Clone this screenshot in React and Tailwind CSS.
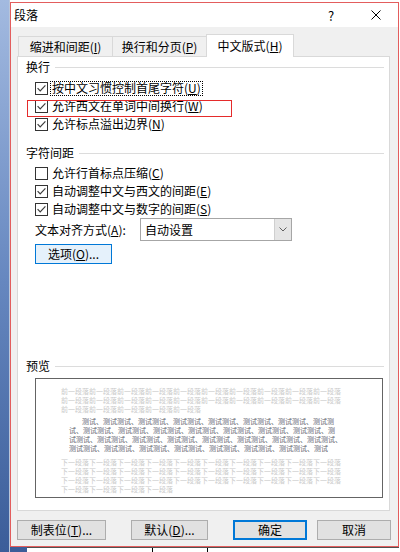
import React from 'react';

const Key = ({ k }) => (
  <>
    (<span className="underline">{k}</span>)
  </>
);

const CheckBox = ({ checked }) => (
  <span className="w-[13px] h-[13px] shrink-0 border border-[#333333] bg-white flex items-center justify-center">
    {checked && (
      <svg width="11" height="11" viewBox="0 0 11 11">
        <path d="M1.6 5.2 L4.2 7.9 L9.4 2.4" fill="none" stroke="#3c3c3c" strokeWidth="1.2" />
      </svg>
    )}
  </span>
);

const CheckRow = ({ checked, label, k, focus, mark }) => (
  <div className="relative h-[18px] flex items-center pl-[17px] gap-[2px]">
    <CheckBox checked={checked} />
    <span
      className={
        focus
          ? 'h-[15px] px-[1px] flex items-center border border-dotted border-black'
          : 'h-[15px] px-[1px] flex items-center border border-transparent'
      }
    >
      {label}
      <Key k={k} />
    </span>
    {/* red annotation box */}
    {mark && <div className="absolute left-[9px] top-[3px] w-[205px] h-[17px] border border-[#e52b2b]" />}
  </div>
);

const GroupTitle = ({ title }) => (
  <div className="h-[20px] flex items-center gap-[5px] pl-[8px] pr-[5px]">
    <span>{title}</span>
    <div className="flex-1 h-px bg-[#dcdcdc]" />
  </div>
);

const prevLines = ['前一段落'.repeat(10), '前一段落'.repeat(10), '前一段落'.repeat(5)];
const nextLines = ['下一段落'.repeat(10), '下一段落'.repeat(10), '下一段落'.repeat(10), '下一段落'.repeat(4)];
const sampleLines = [
  '测试、测试测试、测试测试、测试测试、测试测试、测试测试、测试测试、测试测',
  '试、测试测试、测试测试、测试测试、测试测试、测试测试、测试测试、测试测试、测',
  '试测试、测试测试、测试测试、测试测试、测试测试、测试测试、测试测试、测试测试、',
  '测试测试、测试测试、测试测试、测试测试、测试测试、测试测试、测试测试、测试',
];

const Tab = ({ label, k, active }) =>
  active ? (
    <div className="relative z-10 -ml-px -mb-px h-[23px] w-[88px] bg-white border border-b-0 border-[#d9d9d9] flex items-center justify-center">
      {label}
      <Key k={k} />
    </div>
  ) : (
    <div className="h-[20px] w-[95px] -ml-px first:ml-0 bg-[#f0f0f0] border border-b-0 border-[#d9d9d9] flex items-center justify-center">
      {label}
      <Key k={k} />
    </div>
  );

const Button = ({ children, width, focus }) => (
  <div
    className={
      focus
        ? 'h-[20px] flex items-center justify-center bg-[#e1e1e1] border-2 border-[#0078d7]'
        : 'h-[20px] flex items-center justify-center bg-[#e1e1e1] border border-[#adadad]'
    }
    style={{ width }}
  >
    {children}
  </div>
);

export default function App() {
  return (
    <div className="w-[400px] h-[552px] flex bg-white overflow-hidden text-[12px] leading-none text-black font-['Noto_Sans_CJK_SC',sans-serif]">
      {/* desktop behind the dialog */}
      <div className="w-[10px] h-full bg-gradient-to-b from-[#a3bae0] via-[#6788c0] to-[#3b5d99] border-r border-[#b9c6da]" />

      <div className="flex flex-col w-[389px]">
        <div className="h-[2px]" />

        {/* dialog */}
        <div className="h-[545px] flex flex-col border border-[#e35d5d] bg-[#f0f0f0]">
          {/* title bar */}
          <div className="h-[24px] flex items-center bg-white pl-[3px] pr-[17px]">
            <span className="text-[12px]">段落</span>
            <div className="flex-1" />
            <span className="w-[20px] text-center text-[13px]">?</span>
            <svg className="ml-[30px]" width="10" height="10" viewBox="0 0 10 10">
              <path d="M0.5 0.5 L9.5 9.5 M9.5 0.5 L0.5 9.5" stroke="#000" strokeWidth="1" />
            </svg>
          </div>

          {/* tabs */}
          <div className="flex items-end h-[22px] mt-[7px] pl-[7px]">
            <Tab label="缩进和间距" k="I" />
            <Tab label="换行和分页" k="P" />
            <Tab label="中文版式" k="H" active />
          </div>

          {/* tab panel */}
          <div className="ml-[6px] w-[373px] h-[455px] bg-white border border-[#d9d9d9] flex flex-col">
            <GroupTitle title="换行" />
            <div className="mt-[2px]">
              <CheckRow checked label="按中文习惯控制首尾字符" k="U" focus />
              <CheckRow checked label="允许西文在单词中间换行" k="W" mark />
              <CheckRow checked label="允许标点溢出边界" k="N" />
            </div>

            <div className="mt-[10px]">
              <GroupTitle title="字符间距" />
            </div>
            <div className="mt-[1px]">
              <CheckRow label="允许行首标点压缩" k="C" />
              <CheckRow checked label="自动调整中文与西文的间距" k="E" />
              <CheckRow checked label="自动调整中文与数字的间距" k="S" />
            </div>

            <div className="h-[23px] flex items-center pl-[17px]">
              <span className="w-[105px]">
                文本对齐方式<Key k="A" />:
              </span>
              <div className="w-[152px] h-full flex border border-[#a6a6a6] bg-white">
                <span className="flex-1 flex items-center pl-[4px]">自动设置</span>
                <div className="w-[17px] h-full bg-[#e5e5e5] border-l border-[#cfcfcf] flex items-center justify-center">
                  <svg width="8" height="5" viewBox="0 0 8 5">
                    <path d="M0.5 0.5 L4 4 L7.5 0.5" fill="none" stroke="#606060" strokeWidth="1" />
                  </svg>
                </div>
              </div>
            </div>

            <div className="mt-[3px] ml-[17px] w-[77px] h-[20px] flex items-center justify-center bg-[#e5f1fb] border border-[#0078d7]">
              选项<Key k="O" />...
            </div>

            <div className="mt-[92px]">
              <GroupTitle title="预览" />
            </div>

            {/* preview */}
            <div className="mt-[2px] ml-[17px] w-[348px] h-[120px] border border-[#646464] bg-white overflow-hidden pt-[8px] text-[7px] leading-[9px] whitespace-nowrap">
              <div className="pl-[25px] text-[#c9c9c9]">
                {prevLines.map((l, i) => (
                  <div key={i}>{l}</div>
                ))}
              </div>
              <div className="mt-[3px] pl-[33px] text-[#5f5f6e]">
                {sampleLines.map((l, i) => (
                  <div key={i} className={i === 0 ? 'pl-[13px]' : ''}>
                    {l}
                  </div>
                ))}
              </div>
              <div className="mt-[5px] pl-[25px] text-[#c9c9c9]">
                {nextLines.map((l, i) => (
                  <div key={i}>{l}</div>
                ))}
              </div>
            </div>
          </div>

          {/* bottom buttons */}
          <div className="flex mt-[9px] pl-[6px]">
            <Button width={89}>
              制表位<Key k="T" />...
            </Button>
            <div className="w-[25px]" />
            <Button width={77}>
              默认<Key k="D" />...
            </Button>
            <div className="w-[25px]" />
            <Button width={74} focus>
              确定
            </Button>
            <div className="w-[10px]" />
            <Button width={74}>取消</Button>
          </div>
        </div>

        {/* window behind, below the dialog */}
        <div className="h-[5px] flex">
          <div className="w-[17px] h-full bg-[#3b5d99]" />
          <div className="flex-1 flex border-t border-[#505050] bg-white">
            <div className="w-[125px]" />
            <div className="w-px bg-black" />
            <div className="w-[54px]" />
            <div className="w-px bg-black" />
          </div>
        </div>
      </div>

      <div className="w-px h-full bg-white" />
    </div>
  );
}
